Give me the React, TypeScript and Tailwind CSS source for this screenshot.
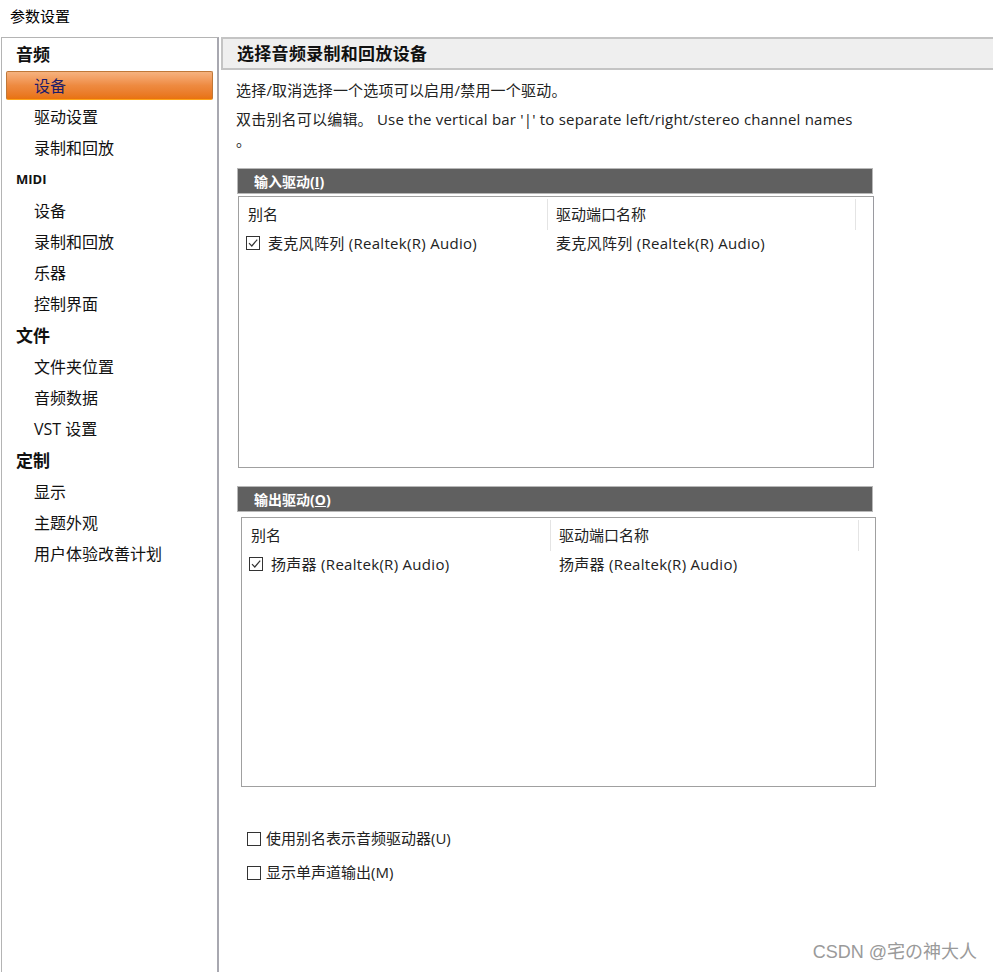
import React from "react";

const font = { fontFamily: '"Open Sans", "Noto Sans CJK SC", sans-serif' };

type NavItem = { label: string; group?: boolean; small?: boolean; active?: boolean };

const navItems: NavItem[] = [
  { label: "音频", group: true },
  { label: "设备", active: true },
  { label: "驱动设置" },
  { label: "录制和回放" },
  { label: "MIDI", group: true, small: true },
  { label: "设备" },
  { label: "录制和回放" },
  { label: "乐器" },
  { label: "控制界面" },
  { label: "文件", group: true },
  { label: "文件夹位置" },
  { label: "音频数据" },
  { label: "VST 设置" },
  { label: "定制", group: true },
  { label: "显示" },
  { label: "主题外观" },
  { label: "用户体验改善计划" },
];

const CheckBox = ({ checked }: { checked?: boolean }) => (
  <span className="w-[14px] h-[14px] border border-[#333] bg-white flex items-center justify-center shrink-0">
    {checked && (
      <svg width="12" height="12" viewBox="0 0 12 12">
        <path d="M2 6.2 L4.8 9 L10.2 2.6" fill="none" stroke="#333" strokeWidth="1.2" />
      </svg>
    )}
  </span>
);

const DriverTable = ({
  title,
  hotkey,
  name,
  outer,
}: {
  title: string;
  hotkey: string;
  name: string;
  outer: string;
}) => (
  <div className="flex flex-col">
    <div className="ml-[3px] w-[636px] h-[26px] bg-[#606060] border border-[#b8b8b8] flex items-center pl-[16px] text-white text-[14px] font-bold">
      {title}(<span className="underline">{hotkey}</span>)
    </div>
    <div className={outer}>
      <div className="flex h-[31px] mt-[2px] text-[15px] text-[#222]">
        <div className="w-[309px] pl-[9px] flex items-center border-r border-[#e4e4e4]">别名</div>
        <div className="w-[308px] pl-[8px] flex items-center border-r border-[#e4e4e4]">驱动端口名称</div>
      </div>
      <div className="flex h-[26px] text-[15px] text-[#222] items-center tracking-[0.3px]">
        <div className="w-[309px] pl-[7px] flex items-center gap-[8px]">
          <CheckBox checked />
          <span>{name} (Realtek(R) Audio)</span>
        </div>
        <div className="w-[308px] pl-[8px]">{name} (Realtek(R) Audio)</div>
      </div>
    </div>
  </div>
);

export default function App() {
  return (
    <div className="w-[993px] h-[972px] bg-white flex flex-col overflow-hidden relative" style={font}>
      <div className="h-[37px] pl-[10px] pt-[5px] text-[15px] text-black">参数设置</div>
      <div className="flex flex-1 min-h-0">
        <div className="w-[218px] ml-[1px] border-l border-t border-[#b4b4b4] border-r-2 border-r-[#a8a8b0] flex flex-col pt-[1px]">
          {navItems.map((item, i) =>
            item.active ? (
              <div
                key={i}
                className="mx-[4px] h-[29px] my-[1px] rounded-[2px] border border-[#c07838] bg-gradient-to-b from-[#f6b27e] via-[#ee8a40] to-[#e8720e] border-b-[#ffa41a] flex items-center pl-[27px] text-[16px] text-[#1c1c6a]"
              >
                {item.label}
              </div>
            ) : (
              <div
                key={i}
                className={
                  "h-[31.25px] flex items-center text-[#111] " +
                  (item.group ? "pl-[14px] font-bold " : "pl-[32px] ") +
                  (item.small ? "text-[13px]" : item.group ? "text-[17px]" : "text-[16px]")
                }
              >
                {item.label}
              </div>
            )
          )}
        </div>
        <div className="flex-1 flex flex-col ml-[2px]">
          <div className="h-[33px] bg-[#efefef] border-t-2 border-b-2 border-l-2 border-[#c4c4c4] flex items-center pl-[14px] text-[17px] font-bold text-[#111] tracking-[0.3px]">
            选择音频录制和回放设备
          </div>
          <div className="pl-[15px] pt-[6px] text-[15px] text-[#222] leading-[29px] tracking-[0.2px]">
            <div>选择/取消选择一个选项可以启用/禁用一个驱动。</div>
            <div>
              双击别名可以编辑。 Use the vertical bar '|' to separate left/right/stereo channel names
            </div>
            <div className="leading-[12px]">。</div>
          </div>
          <div className="pl-[13px] mt-[22px]">
            <DriverTable
              title="输入驱动"
              hotkey="I"
              name="麦克风阵列"
              outer="ml-[4px] mt-[2px] w-[636px] h-[272px] border border-[#a0a0a0] border-r-[#9a9aa0]"
            />
          </div>
          <div className="pl-[13px] mt-[18px]">
            <DriverTable
              title="输出驱动"
              hotkey="O"
              name="扬声器"
              outer="ml-[7px] mt-[5px] w-[635px] h-[270px] border border-[#a0a0a0]"
            />
          </div>
          <div className="pl-[26px] mt-[43px] flex flex-col gap-[17px] text-[15px] text-[#222]">
            <label className="flex items-center gap-[5px] h-[17px]">
              <CheckBox />
              <span>使用别名表示音频驱动器(U)</span>
            </label>
            <label className="flex items-center gap-[5px] h-[17px]">
              <CheckBox />
              <span>显示单声道输出(M)</span>
            </label>
          </div>
        </div>
      </div>
      <div
        className="absolute right-[16px] bottom-[6px] text-[18px] text-[#9a9a9a]"
        style={{ fontFamily: '"Liberation Sans", "Noto Sans CJK SC", sans-serif' }}
      >
        CSDN @宅の神大人
      </div>
    </div>
  );
}
